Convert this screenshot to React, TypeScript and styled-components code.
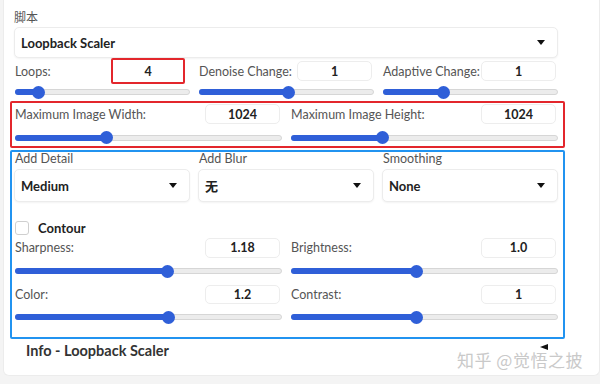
import React from "react";
import styled, { createGlobalStyle } from "styled-components";

const GlobalStyle = createGlobalStyle`
  html, body { margin: 0; padding: 0; background: #f4f4f4; }
  body { font-family: Lato, "Noto Sans CJK SC", sans-serif; width: 600px; height: 384px; overflow: hidden; }
`;

const Page = styled.div`
  width: 600px;
  height: 384px;
  background: #f4f4f4;
  position: relative;
`;

const Panel = styled.div`
  box-sizing: border-box;
  margin-left: 3px;
  width: 597px;
  height: 376px;
  background: #fff;
  border: 1px solid #ececec;
  border-top: none;
  border-radius: 0 0 6px 6px;
  padding: 9px 0 0 10px;
`;

const Content = styled.div`
  width: 544px;
  display: flex;
  flex-direction: column;
`;

const SectionLabel = styled.div`
  font-size: 12px;
  line-height: 16px;
  height: 16px;
  color: #555;
  font-family: "Noto Sans CJK SC", sans-serif;
`;

const Dropdown = styled.div<{ $h: number }>`
  box-sizing: border-box;
  height: ${(p) => p.$h}px;
  background: #fff;
  border: 1px solid #ececec;
  border-radius: 5px;
  box-shadow: 0 1px 2px rgba(0, 0, 0, 0.05);
  display: flex;
  align-items: center;
  justify-content: space-between;
  padding: 0 12px 0 6px;
  font-size: 13px;
  font-weight: 700;
  color: #222;
`;

const DropText = styled.span`
  font-family: Lato, "Noto Sans CJK SC", sans-serif;
`;

const Caret = styled.span`
  width: 0;
  height: 0;
  border-left: 4px solid transparent;
  border-right: 4px solid transparent;
  border-top: 5px solid #111;
`;

const Grid = styled.div<{ $cols: number }>`
  display: grid;
  grid-template-columns: repeat(${(p) => p.$cols}, 1fr);
  column-gap: 8px;
`;

const Col = styled.div`
  display: flex;
  flex-direction: column;
  min-width: 0;
`;

const LabelRow = styled.div<{ $h: number }>`
  height: ${(p) => p.$h}px;
  display: flex;
  align-items: center;
  justify-content: space-between;
  padding-right: 2px;
`;

const Label = styled.span`
  font-size: 12.5px;
  color: #555;
  padding-left: 1px;
  white-space: nowrap;
`;

const NumInput = styled.div<{ $h: number; $hl?: boolean }>`
  box-sizing: border-box;
  width: ${(p) => (p.$hl ? 74 : 75)}px;
  height: ${(p) => p.$h}px;
  background: #fff;
  border: ${(p) => (p.$hl ? "2px solid #e3262c" : "1px solid #ededed")};
  border-radius: ${(p) => (p.$hl ? 2 : 5)}px;
  display: flex;
  align-items: center;
  justify-content: center;
  font-size: 12.5px;
  font-weight: 700;
  color: #222;
  margin-right: ${(p) => (p.$hl ? 3 : 0)}px;
`;

const SliderWrap = styled.div<{ $h: number; $pt: number }>`
  box-sizing: border-box;
  height: ${(p) => p.$h}px;
  padding-top: ${(p) => p.$pt}px;
  display: flex;
  align-items: center;
  padding-left: 1px;
`;

const Track = styled.div`
  position: relative;
  flex: 1;
  height: 6px;
  border-radius: 3px;
  background: #ececec;
  border: 1px solid #d6d6d6;
  box-sizing: border-box;
`;

const Fill = styled.div`
  position: absolute;
  left: -1px;
  top: -1px;
  height: 6px;
  border-radius: 3px;
  background: #2f5fd8;
`;

const Thumb = styled.div`
  position: absolute;
  top: 50%;
  width: 13px;
  height: 13px;
  margin: -6.5px 0 0 -6.5px;
  border-radius: 50%;
  background: #2f5fd8;
`;

const Box = styled.div<{ $color: string; $mt: number; $pb: number }>`
  margin: ${(p) => p.$mt}px -7px 0 -4px;
  border: 2px solid ${(p) => p.$color};
  border-radius: 2px;
  padding: 0 5px ${(p) => p.$pb}px 2px;
`;

const SmallLabel = styled.div`
  height: 14px;
  line-height: 14px;
  font-size: 12.5px;
  color: #555;
  padding-left: 1px;
  margin-bottom: 3px;
`;

const CheckRow = styled.div`
  margin-top: 18px;
  height: 16px;
  display: flex;
  align-items: center;
  gap: 9px;
  padding-left: 1px;
`;

const CheckBox = styled.span`
  box-sizing: border-box;
  width: 14px;
  height: 14px;
  border: 1px solid #cfcfcf;
  border-radius: 3px;
  background: #fff;
`;

const CheckText = styled.span`
  font-size: 13px;
  font-weight: 700;
  color: #222;
`;

const InfoRow = styled.div`
  height: 22px;
  display: flex;
  align-items: center;
  justify-content: space-between;
  padding: 0 10px 0 12px;
`;

const InfoText = styled.span`
  font-size: 14.5px;
  font-weight: 700;
  color: #333;
`;

const InfoArrow = styled.span`
  width: 0;
  height: 0;
  margin-top: -6px;
  border-top: 3px solid transparent;
  border-bottom: 3px solid transparent;
  border-right: 8px solid #111;
`;

const Watermark = styled.div`
  position: absolute;
  left: 457px;
  top: 347px;
  font-family: "Noto Sans CJK SC", sans-serif;
  font-size: 17px;
  letter-spacing: 0.5px;
  color: #c9c9c9;
  white-space: nowrap;
`;

type S = { label: string; value: string; f: number; lh: number; ih: number; sh: number; pt: number; hl?: boolean };

const Slider = ({ f, h, pt }: { f: number; h: number; pt: number }) => (
  <SliderWrap $h={h} $pt={pt}>
    <Track>
      <Fill style={{ width: `calc(${f * 100}% + 1px)` }} />
      <Thumb style={{ left: `${f * 100}%` }} />
    </Track>
  </SliderWrap>
);

const SliderField = ({ label, value, f, lh, ih, sh, pt, hl }: S) => (
  <Col>
    <LabelRow $h={lh}>
      <Label>{label}</Label>
      <NumInput $h={ih} $hl={hl}>{value}</NumInput>
    </LabelRow>
    <Slider f={f} h={sh} pt={pt} />
  </Col>
);

const SelectField = ({ label, value }: { label: string; value: string }) => (
  <Col>
    <SmallLabel>{label}</SmallLabel>
    <Dropdown $h={33}>
      <DropText>{value}</DropText>
      <Caret />
    </Dropdown>
  </Col>
);

export default function App() {
  return (
    <Page>
      <GlobalStyle />
      <Panel>
        <Content>
          <SectionLabel>脚本</SectionLabel>
          <Dropdown $h={31} style={{ marginTop: 2 }}>
            <DropText>Loopback Scaler</DropText>
            <Caret />
          </Dropdown>
          <Grid $cols={3}>
            <SliderField label="Loops:" value="4" f={0.13} lh={26} ih={26} sh={16} pt={0} hl />
            <SliderField label="Denoise Change:" value="1" f={0.51} lh={26} ih={20} sh={16} pt={0} />
            <SliderField label="Adaptive Change:" value="1" f={0.345} lh={26} ih={20} sh={16} pt={0} />
          </Grid>
          <Box $color="#e3262c" $mt={1} $pb={0}>
            <Grid $cols={2}>
              <SliderField label="Maximum Image Width:" value="1024" f={0.34} lh={22} ih={20} sh={21} pt={4} />
              <SliderField label="Maximum Image Height:" value="1024" f={0.34} lh={22} ih={20} sh={21} pt={4} />
            </Grid>
          </Box>
          <Box $color="#2193f0" $mt={2} $pb={8}>
            <Grid $cols={3}>
              <SelectField label="Add Detail" value="Medium" />
              <SelectField label="Add Blur" value="无" />
              <SelectField label="Smoothing" value="None" />
            </Grid>
            <CheckRow>
              <CheckBox />
              <CheckText>Contour</CheckText>
            </CheckRow>
            <Grid $cols={2}>
              <SliderField label="Sharpness:" value="1.18" f={0.57} lh={23} ih={20} sh={24} pt={0} />
              <SliderField label="Brightness:" value="1.0" f={0.47} lh={23} ih={20} sh={24} pt={0} />
              <SliderField label="Color:" value="1.2" f={0.577} lh={22} ih={19} sh={24} pt={0} />
              <SliderField label="Contrast:" value="1" f={0.47} lh={22} ih={19} sh={24} pt={0} />
            </Grid>
          </Box>
          <InfoRow>
            <InfoText>Info - Loopback Scaler</InfoText>
            <InfoArrow />
          </InfoRow>
        </Content>
      </Panel>
      <Watermark>知乎 @觉悟之披</Watermark>
    </Page>
  );
}
